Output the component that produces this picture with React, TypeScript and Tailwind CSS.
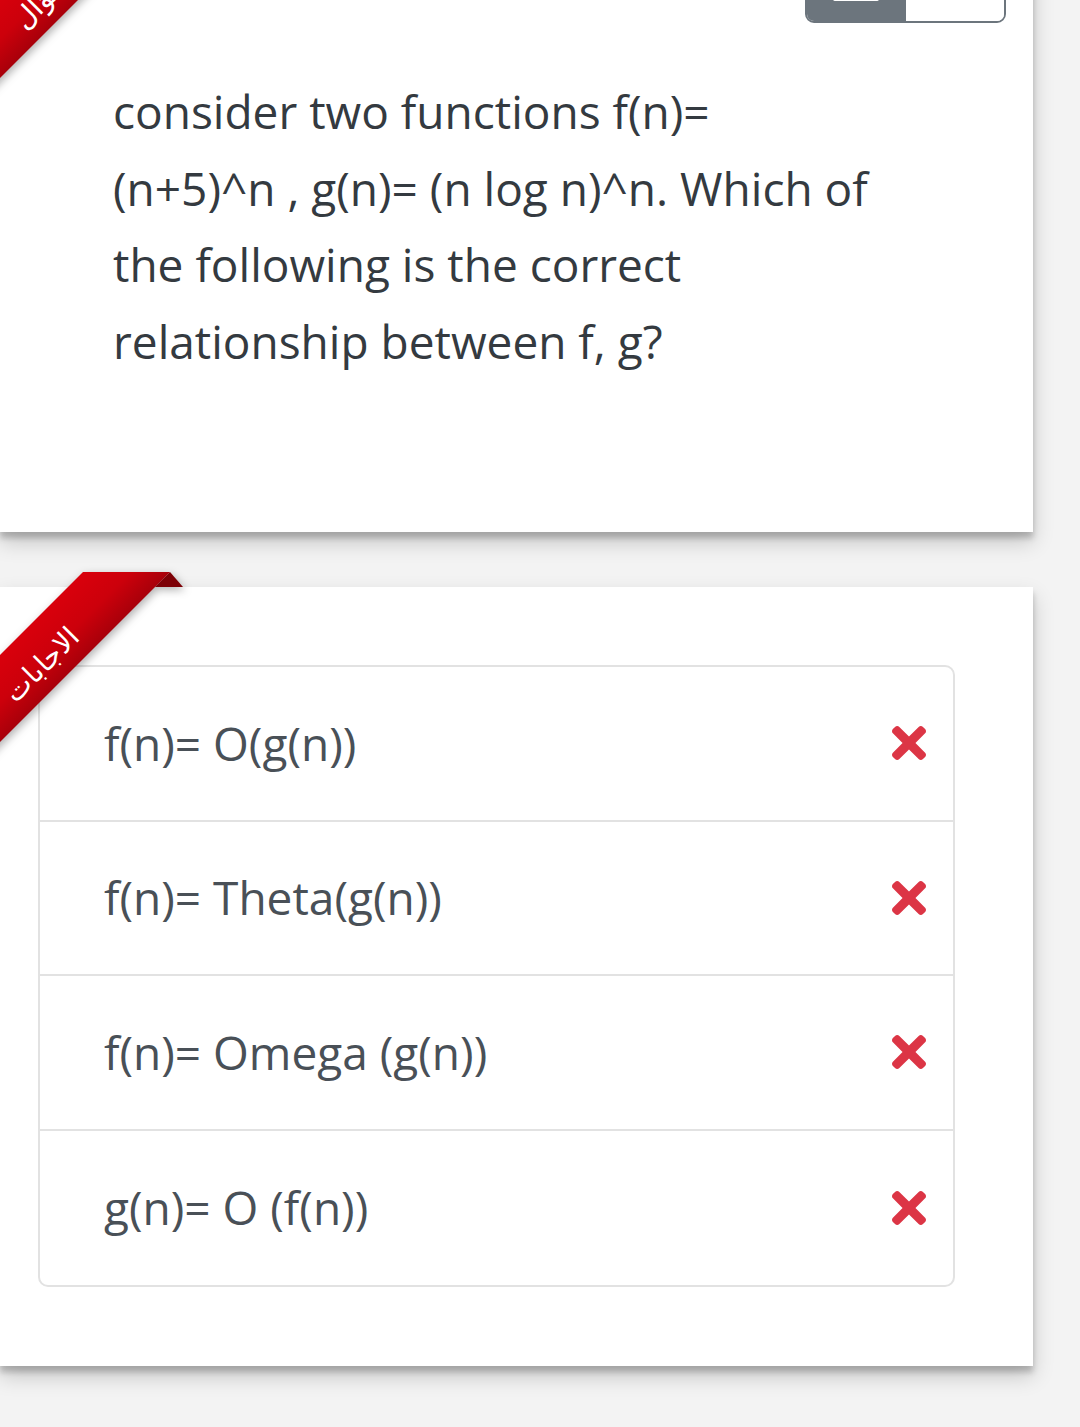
import React from "react";

const XIcon = () => (
  <svg viewBox="0 80 352 352" className="w-[34px] h-[34px]" fill="#dc3545">
    <path d="M242.72 256l100.07-100.07c12.28-12.28 12.28-32.19 0-44.48l-22.24-22.24c-12.28-12.28-32.19-12.28-44.48 0L176 189.28 75.93 89.21c-12.28-12.28-32.19-12.28-44.48 0L9.21 111.45c-12.28 12.28-12.28 32.19 0 44.48L109.28 256 9.21 356.07c-12.280 12.28-12.28 32.19 0 44.48l22.24 22.24c12.28 12.28 32.2 12.28 44.48 0L176 322.72l100.07 100.07c12.28 12.28 32.2 12.28 44.48 0l22.24-22.24c12.28-12.28 12.28-32.19 0-44.48L242.72 256z" />
  </svg>
);

function Ribbon({ label, id }: { label: string; id: string }) {
  return (
    <div className="pointer-events-none absolute left-0 top-0 z-10">
      <svg
        className="absolute left-[-120px] top-[-20px] overflow-visible drop-shadow-[2px_3px_4px_rgba(0,0,0,0.3)]"
        width="320"
        height="300"
        viewBox="-120 -20 320 300"
      >
        <defs>
          <linearGradient id={id} gradientUnits="userSpaceOnUse" x1="34" y1="34" x2="77.5" y2="77.5">
            <stop offset="0" stopColor="#d9000c" />
            <stop offset="0.55" stopColor="#cc000b" />
            <stop offset="1" stopColor="#a8000a" />
          </linearGradient>
        </defs>
        <polygon points="155,0 170,-15 183,0" fill="#7d0006" />
        <polygon points="83,-15 170,-15 -120,275 -120,188" fill={`url(#${id})`} />
      </svg>
      <div
        className="absolute left-[42px] top-[78px] -translate-x-1/2 -translate-y-1/2 -rotate-45 whitespace-nowrap text-[28px] leading-none text-white"
        style={{ fontFamily: '"DejaVu Sans", sans-serif' }}
        dir="rtl"
      >
        {label}
      </div>
    </div>
  );
}

const answers = ["f(n)= O(g(n))", "f(n)= Theta(g(n))", "f(n)= Omega (g(n))", "g(n)= O (f(n))"];

export default function App() {
  return (
    <div
      className="h-[1427px] w-[1080px] overflow-hidden bg-[#f3f3f3]"
      style={{ fontFamily: '"Open Sans", "Noto Sans", sans-serif' }}
    >
      <div className="mt-[-77px] flex w-[1033px] flex-col gap-[55px]">
        <section className="relative h-[609px] bg-white pt-[50px] shadow-[0_10px_20px_rgba(0,0,0,0.19),0_6px_6px_rgba(0,0,0,0.2)]">
          <Ribbon label="سؤال" id="rib1" />
          <div className="flex justify-end pr-[27px]">
            <div className="flex h-[50px] w-[201px] overflow-hidden rounded-b-[9px] border-2 border-[#6c757d]">
              <div className="flex flex-1 items-end justify-center bg-[#6c757d] pb-[20px]">
                <div className="h-[24px] w-[46px] rounded-[2px] bg-white" />
              </div>
              <div className="flex flex-1 items-end justify-center bg-white pb-[21px]">
                <div className="h-[24px] w-[45px] rounded-[2px] bg-[#5b6166]" />
              </div>
            </div>
          </div>
          <p className="mt-[50px] whitespace-nowrap pl-[113px] text-[46px] leading-[76.5px] text-[#343a40]">
            consider two functions f(n)=
            <br />
            (n+5)^n , g(n)= (n log n)^n. Which of
            <br />
            the following is the correct
            <br />
            relationship between f, g?
          </p>
        </section>

        <section className="relative h-[779px] bg-white pl-[38px] pr-[78px] pt-[78px] shadow-[0_10px_20px_rgba(0,0,0,0.19),0_6px_6px_rgba(0,0,0,0.2)]">
          <Ribbon label="الاجابات" id="rib2" />
          <div className="flex flex-col divide-y-2 divide-[#e2e2e2] rounded-[10px] border-2 border-[#e2e2e2]">
            {answers.map((a) => (
              <div key={a} className="flex h-[154.5px] items-center justify-between pl-[64px] pr-[27px]">
                <span className="whitespace-nowrap text-[46px] text-[#495057]">{a}</span>
                <XIcon />
              </div>
            ))}
          </div>
        </section>
      </div>
    </div>
  );
}
